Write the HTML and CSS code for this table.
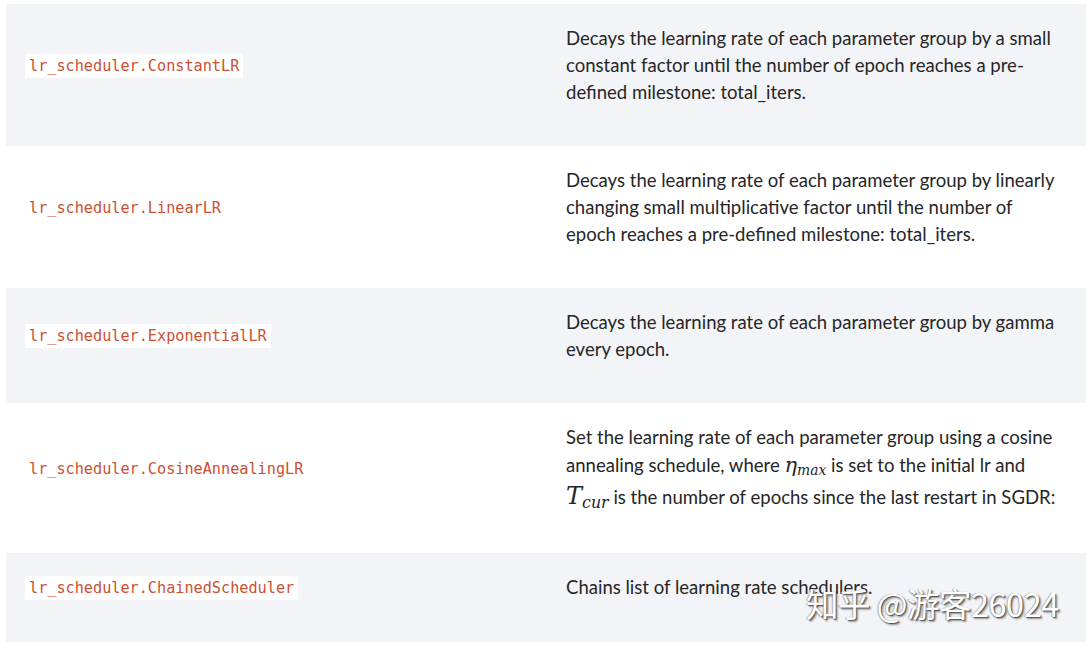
FILE: index.html
```html
<!DOCTYPE html>
<html>
<head>
<meta charset="utf-8">
<link rel="stylesheet" href="styles.css">
</head>
<body>
<div class="table">
  <div class="row alt">
    <div class="name"><code>lr_scheduler.ConstantLR</code></div>
    <div class="desc"><p>Decays the learning rate of each parameter group by a small constant factor until the number of epoch reaches a pre-defined milestone: total_iters.</p></div>
  </div>
  <div class="row">
    <div class="name"><code class="plain">lr_scheduler.LinearLR</code></div>
    <div class="desc"><p>Decays the learning rate of each parameter group by linearly changing small multiplicative factor until the number of epoch reaches a pre-defined milestone: total_iters.</p></div>
  </div>
  <div class="row alt">
    <div class="name"><code>lr_scheduler.ExponentialLR</code></div>
    <div class="desc"><p>Decays the learning rate of each parameter group by gamma every epoch.</p></div>
  </div>
  <div class="row">
    <div class="name"><code class="plain">lr_scheduler.CosineAnnealingLR</code></div>
    <div class="desc"><p>Set the learning rate of each parameter group using a cosine annealing schedule, where <span class="math eta">η<sub>max</sub></span> is set to the initial lr and <span class="math big">T<sub>cur</sub></span> is the number of epochs since the last restart in SGDR:</p></div>
  </div>
  <div class="row alt">
    <div class="name"><code>lr_scheduler.ChainedScheduler</code></div>
    <div class="desc"><p>Chains list of learning rate schedulers.</p></div>
  </div>
</div>
<div class="watermark">知乎 @游客26024</div>
</body>
</html>
```
FILE: styles.css
```css
html, body {
  margin: 0;
  padding: 0;
  background: #ffffff;
}
body {
  position: relative;
  width: 1089px;
  height: 648px;
  overflow: hidden;
  font-family: "Lato", "Noto Sans", sans-serif;
  color: #262626;
}
.table {
  display: flex;
  flex-direction: column;
  padding: 4px 3px 0 6px;
}
.row {
  display: grid;
  grid-template-columns: 560px 1fr;
  align-items: center;
  padding: 21px 0 40px;
}
.row:last-child {
  padding-bottom: 41px;
}
.row.alt {
  background: #f3f4f7;
}
.name {
  padding-left: 19px;
  padding-bottom: 3px;
}
code {
  font-family: "DejaVu Sans Mono", "Liberation Mono", monospace;
  font-size: 15.2px;
  color: #cc4f32;
  background: #ffffff;
  padding: 3px 4px;
  line-height: 15px;
}
code.plain {
  background: transparent;
}
.desc p {
  margin: 0;
  font-size: 18.55px;
  line-height: 27px;
  padding-right: 24px;
}
.math {
  font-family: "DejaVu Serif", "Liberation Serif", serif;
  font-style: italic;
}
.math.eta {
  font-size: 21px;
  line-height: 29px;
}
.math.big {
  font-size: 24px;
  line-height: 33px;
}
.math sub {
  font-size: 0.66em;
  vertical-align: -0.25em;
  line-height: 0;
}
.watermark {
  position: absolute;
  left: 806px;
  top: 583px;
  font-family: "Noto Sans CJK SC", sans-serif;
  font-size: 32.5px;
  line-height: 40px;
  color: #ffffff;
  text-shadow: 1px 1px 1px #555, 2px 2px 2px #999, -1px 0 1px #aaa;
  letter-spacing: -0.5px;
}
```
